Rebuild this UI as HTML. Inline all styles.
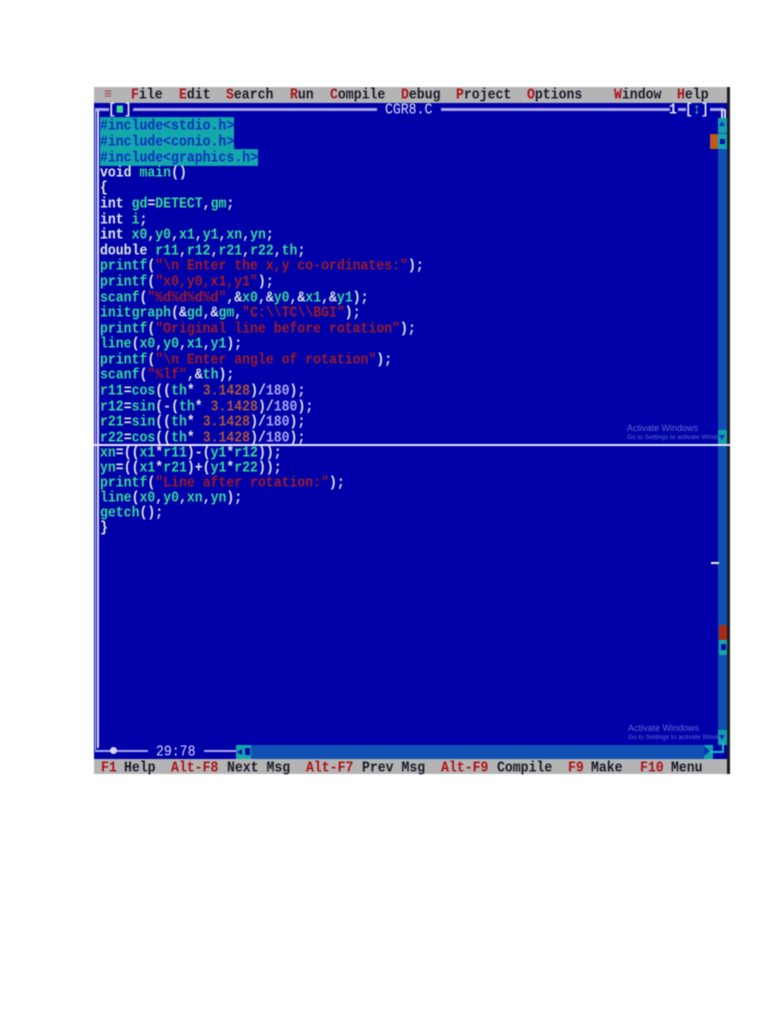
<!DOCTYPE html>
<html>
<head>
<meta charset="utf-8">
<style>
html,body{margin:0;padding:0;background:#fff;width:768px;height:1024px;overflow:hidden}
#p{position:absolute;left:0;top:0;width:768px;height:1024px;filter:blur(.45px)}
.a{position:absolute}
.t{position:absolute;font-family:"Liberation Mono",monospace;font-weight:bold;font-size:13.17px;line-height:15px;white-space:pre;transform-origin:0 50%;transform:scaleY(1.12);color:#35dc9a}
.k{color:#dfe9e6}.s{color:#9c1c2c}.n{color:#a8583a}.d{color:#a8a8f4}.y{color:#f0f0d0}
.m{color:#1a1a28}.r{color:#b01018}
.inc{background:#12a8ac;color:#0c2fc0}
.v{background:#a8a8f0}
.l{background:#dcdcfc}
.w{position:absolute;font-family:"Liberation Sans",sans-serif;white-space:pre;color:#5a6cd0}
</style>
</head>
<body>
<div id="p">
<div class="a" style="left:94px;top:87px;width:633px;height:16px;background:#b4b4b4"></div>
<div class="a" style="left:94px;top:103px;width:633px;height:656px;background:#0000a8"></div>
<div class="a" style="left:94px;top:759px;width:633px;height:15px;background:#b4b4b4"></div>
<div class="a" style="left:727px;top:87px;width:3px;height:687px;background:#1a1a22"></div>

<div class="t m" style="left:104px;top:87px;color:#b04050">≡</div>
<div class="t m" style="left:131px;top:87px"><span class="r">F</span>ile</div>
<div class="t m" style="left:179px;top:87px"><span class="r">E</span>dit</div>
<div class="t m" style="left:226px;top:87px"><span class="r">S</span>earch</div>
<div class="t m" style="left:290px;top:87px"><span class="r">R</span>un</div>
<div class="t m" style="left:330px;top:87px"><span class="r">C</span>ompile</div>
<div class="t m" style="left:401px;top:87px"><span class="r">D</span>ebug</div>
<div class="t m" style="left:456px;top:87px"><span class="r">P</span>roject</div>
<div class="t m" style="left:527px;top:87px"><span class="r">O</span>ptions</div>
<div class="t m" style="left:614px;top:87px"><span class="r">W</span>indow</div>
<div class="t m" style="left:677px;top:87px"><span class="r">H</span>elp</div>

<!-- top frame -->
<div class="a v" style="left:95px;top:108px;width:14px;height:3px"></div>
<div class="t" style="left:108px;top:102px;color:#dfe3f8">[<span style="color:#35dc9a">■</span>]</div>
<div class="a v" style="left:133px;top:108px;width:244px;height:3px"></div>
<div class="t" style="left:385px;top:102px;color:#dfe3f8;font-weight:normal">CGR8.C</div>
<div class="a v" style="left:441px;top:108px;width:229px;height:3px"></div>
<div class="t" style="left:669px;top:102px;color:#e8e8f8">1</div>
<div class="a v" style="left:678px;top:108px;width:8px;height:3px"></div>
<div class="t" style="left:685px;top:102px;color:#dfe3f8">[<span style="color:#35dc9a">↕</span>]</div>
<div class="a v" style="left:710px;top:108px;width:14px;height:3px"></div>
<div class="a l" style="left:721px;top:109px;width:2px;height:10px"></div>
<div class="a l" style="left:724px;top:109px;width:2px;height:10px"></div>

<!-- left frame -->
<div class="a l" style="left:95px;top:110px;width:1px;height:641px"></div>
<div class="a l" style="left:97px;top:110px;width:2px;height:638px"></div>
<div class="a v" style="left:95px;top:750px;width:53px;height:2px"></div>
<div class="a" style="left:110px;top:747px;width:7px;height:7px;background:#d8d8f8;border-radius:50%"></div>
<div class="t" style="left:156px;top:744px;color:#d8dcf8;font-weight:normal">29:78</div>
<div class="a v" style="left:204px;top:750px;width:32px;height:2px"></div>

<!-- vertical scrollbar -->
<div class="a" style="left:718px;top:118px;width:9px;height:627px;background:#1050b4"></div>
<div class="a" style="left:718px;top:118px;width:9px;height:15px;background:#12a0b0"></div>
<div class="a" style="left:719px;top:121px;width:0;height:0;border-left:3.5px solid transparent;border-right:3.5px solid transparent;border-bottom:5px solid #0c30b8"></div>
<div class="a" style="left:710px;top:134px;width:8px;height:15px;background:#c05a1c"></div>
<div class="a" style="left:718px;top:134px;width:9px;height:15px;background:#12a8ac"></div>
<div class="a" style="left:720px;top:139px;width:5px;height:5px;background:#0808a8"></div>
<div class="a" style="left:718px;top:430px;width:9px;height:14px;background:#12a0b0"></div>
<div class="a" style="left:719px;top:435px;width:0;height:0;border-left:3.5px solid transparent;border-right:3.5px solid transparent;border-top:5px solid #0c30b8"></div>
<div class="a" style="left:711px;top:562px;width:8px;height:2px;background:#f0f0d0"></div>
<div class="a" style="left:719px;top:625px;width:8px;height:15px;background:#a82a10"></div>
<div class="a" style="left:719px;top:640px;width:8px;height:15px;background:#12a8ac"></div>
<div class="a" style="left:721px;top:644px;width:5px;height:6px;background:#0808a8"></div>
<div class="a" style="left:718px;top:730px;width:9px;height:15px;background:#12a0b0"></div>
<div class="a" style="left:719px;top:735px;width:0;height:0;border-left:3.5px solid transparent;border-right:3.5px solid transparent;border-top:5px solid #0c30b8"></div>

<!-- horizontal scrollbar -->
<div class="a" style="left:236px;top:745px;width:468px;height:14px;background:#1050b4"></div>
<div class="a" style="left:236px;top:745px;width:15px;height:14px;background:#12a8ac"></div>
<div class="a" style="left:237px;top:749px;width:0;height:0;border-top:3.5px solid transparent;border-bottom:3.5px solid transparent;border-right:5px solid #0808a8"></div>
<div class="a" style="left:245px;top:748px;width:5px;height:7px;background:#0808a8"></div>
<div class="a" style="left:704px;top:745px;width:9px;height:14px;background:#12a0b0"></div>
<div class="a" style="left:704px;top:746px;width:0;height:0;border-top:5px solid transparent;border-bottom:5px solid transparent;border-left:6px solid #0c30b8"></div>
<div class="a" style="left:710px;top:751px;width:13px;height:2px;background:#12c0c0"></div>
<div class="a" style="left:722px;top:742px;width:2px;height:11px;background:#12c0c0"></div>

<!-- code upper -->
<div class="t" style="left:100px;top:118px"><span class="inc">#include&lt;stdio.h&gt;</span></div>
<div class="t" style="left:100px;top:134px"><span class="inc">#include&lt;conio.h&gt;</span></div>
<div class="t" style="left:100px;top:150px"><span class="inc">#include&lt;graphics.h&gt;</span></div>
<div class="t" style="left:100px;top:165px"><span class="k">void</span> main<span class="k">()</span></div>
<div class="t" style="left:100px;top:180px"><span class="y">{</span></div>
<div class="t" style="left:100px;top:196px"><span class="k">int</span> gd<span class="k">=</span>DETECT<span class="k">,</span>gm<span class="k">;</span></div>
<div class="t" style="left:100px;top:212px"><span class="k">int</span> i<span class="k">;</span></div>
<div class="t" style="left:100px;top:227px"><span class="k">int</span> x0<span class="k">,</span>y0<span class="k">,</span>x1<span class="k">,</span>y1<span class="k">,</span>xn<span class="k">,</span>yn<span class="k">;</span></div>
<div class="t" style="left:100px;top:243px"><span class="k">double</span> r11<span class="k">,</span>r12<span class="k">,</span>r21<span class="k">,</span>r22<span class="k">,</span>th<span class="k">;</span></div>
<div class="t" style="left:100px;top:258px">printf<span class="k">(</span><span class="s">"\n Enter the x,y co-ordinates:"</span><span class="k">);</span></div>
<div class="t" style="left:100px;top:274px">printf<span class="k">(</span><span class="s">"x0,y0,x1,y1"</span><span class="k">);</span></div>
<div class="t" style="left:100px;top:290px">scanf<span class="k">(</span><span class="s">"%d%d%d%d"</span><span class="k">,&amp;</span>x0<span class="k">,&amp;</span>y0<span class="k">,&amp;</span>x1<span class="k">,&amp;</span>y1<span class="k">);</span></div>
<div class="t" style="left:100px;top:305px">initgraph<span class="k">(&amp;</span>gd<span class="k">,&amp;</span>gm<span class="k">,</span><span class="s">"C:\\TC\\BGI"</span><span class="k">);</span></div>
<div class="t" style="left:100px;top:321px">printf<span class="k">(</span><span class="s">"Original line before rotation"</span><span class="k">);</span></div>
<div class="t" style="left:100px;top:336px">line<span class="k">(</span>x0<span class="k">,</span>y0<span class="k">,</span>x1<span class="k">,</span>y1<span class="k">);</span></div>
<div class="t" style="left:100px;top:352px">printf<span class="k">(</span><span class="s">"\n Enter angle of rotation"</span><span class="k">);</span></div>
<div class="t" style="left:100px;top:367px">scanf<span class="k">(</span><span class="s">"%lf"</span><span class="k">,&amp;</span>th<span class="k">);</span></div>
<div class="t" style="left:100px;top:383px">r11<span class="k">=</span>cos<span class="k">((</span>th<span class="k">*</span> <span class="n">3.1428</span><span class="k">)/</span><span class="d">180</span><span class="k">);</span></div>
<div class="t" style="left:100px;top:399px">r12<span class="k">=</span>sin<span class="k">(-(</span>th<span class="k">*</span> <span class="n">3.1428</span><span class="k">)/</span><span class="d">180</span><span class="k">);</span></div>
<div class="t" style="left:100px;top:414px">r21<span class="k">=</span>sin<span class="k">((</span>th<span class="k">*</span> <span class="n">3.1428</span><span class="k">)/</span><span class="d">180</span><span class="k">);</span></div>
<div class="t" style="left:100px;top:430px">r22<span class="k">=</span>cos<span class="k">((</span>th<span class="k">*</span> <span class="n">3.1428</span><span class="k">)/</span><span class="d">180</span><span class="k">);</span></div>

<!-- separator -->
<div class="a" style="left:94px;top:444px;width:636px;height:2px;background:#e8e8fa"></div>

<!-- code lower -->
<div class="t" style="left:100px;top:445px">xn<span class="k">=((</span>x1<span class="k">*</span>r11<span class="k">)-(</span>y1<span class="k">*</span>r12<span class="k">));</span></div>
<div class="t" style="left:100px;top:460px">yn<span class="k">=((</span>x1<span class="k">*</span>r21<span class="k">)+(</span>y1<span class="k">*</span>r22<span class="k">));</span></div>
<div class="t" style="left:100px;top:475px">printf<span class="k">(</span><span class="s">"Line after rotation:"</span><span class="k">);</span></div>
<div class="t" style="left:100px;top:490px">line<span class="k">(</span>x0<span class="k">,</span>y0<span class="k">,</span>xn<span class="k">,</span>yn<span class="k">);</span></div>
<div class="t" style="left:100px;top:505px">getch<span class="k">();</span></div>
<div class="t" style="left:100px;top:520px"><span class="y">}</span></div>

<!-- watermark -->
<div class="w" style="left:627px;top:422px;font-size:9px;line-height:12px">Activate Windows</div>
<div class="w" style="left:627px;top:433px;font-size:6.5px;line-height:9px;width:91px;overflow:hidden">Go to Settings to activate Windows</div>
<div class="w" style="left:628px;top:722px;font-size:9px;line-height:12px">Activate Windows</div>
<div class="w" style="left:628px;top:733px;font-size:6.5px;line-height:9px;width:91px;overflow:hidden">Go to Settings to activate Windows</div>

<!-- status -->
<div class="t r" style="left:101px;top:760px">F1</div>
<div class="t m" style="left:124px;top:760px">Help</div>
<div class="t r" style="left:171px;top:760px">Alt-F8</div>
<div class="t m" style="left:227px;top:760px">Next Msg</div>
<div class="t r" style="left:306px;top:760px">Alt-F7</div>
<div class="t m" style="left:362px;top:760px">Prev Msg</div>
<div class="t r" style="left:441px;top:760px">Alt-F9</div>
<div class="t m" style="left:497px;top:760px">Compile</div>
<div class="t r" style="left:568px;top:760px">F9</div>
<div class="t m" style="left:591px;top:760px">Make</div>
<div class="t r" style="left:640px;top:760px">F10</div>
<div class="t m" style="left:671px;top:760px">Menu</div>
</div>
</body>
</html>
